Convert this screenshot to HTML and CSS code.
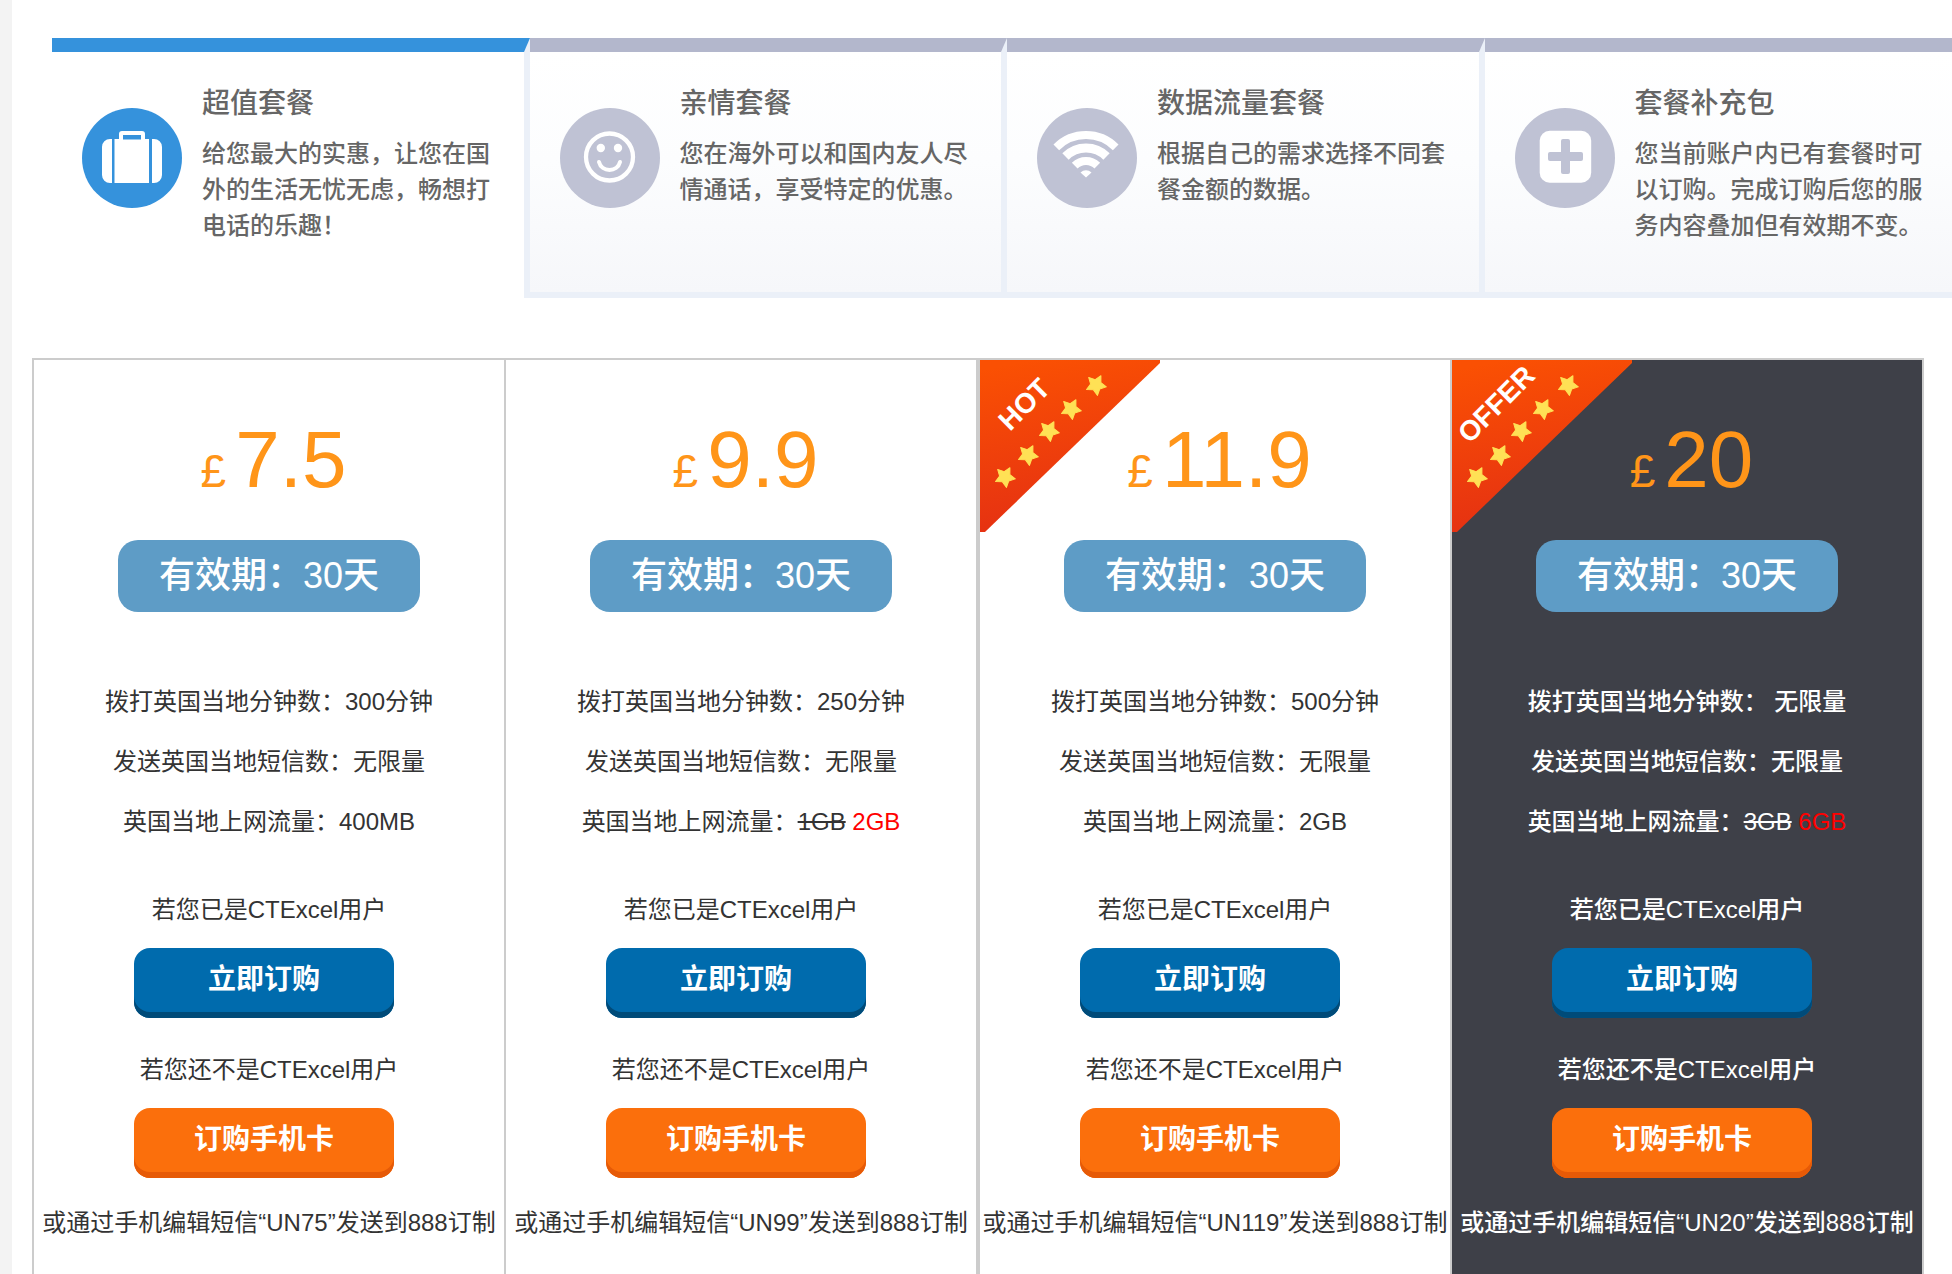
FILE: index.html
```html
<!DOCTYPE html>
<html lang="zh-CN">
<head>
<meta charset="utf-8">
<title>CTExcel 套餐</title>
<link rel="stylesheet" href="styles.css">
</head>
<body>
<main class="page">
  <nav class="tabs">
    <a class="tab tab-active" href="#value">
      <svg class="tab-icon" viewBox="0 0 100 100" aria-hidden="true">
        <circle class="disc" cx="50" cy="50" r="50"/>
        <path class="glyph" d="M30 31v44h-2a8 8 0 0 1-8-8V39a8 8 0 0 1 8-8zM70 31v44h2a8 8 0 0 0 8-8V39a8 8 0 0 0-8-8z"/>
        <path class="glyph" fill-rule="evenodd" d="M32.500 31H37v-5a3 3 0 0 1 3-3h20a3 3 0 0 1 3 3v5h4v44H32.500zM41 27v4.500h18V27z"/>
      </svg>
      <span class="tab-body">
        <span class="tab-title">超值套餐</span>
        <span class="tab-text">给您最大的实惠，让您在国外的生活无忧无虑，畅想打电话的乐趣！</span>
      </span>
    </a>
    <a class="tab" href="#family">
      <svg class="tab-icon" viewBox="0 0 100 100" aria-hidden="true">
        <circle class="disc" cx="50" cy="50" r="50"/>
        <circle class="line" cx="49.500" cy="49" r="23.500" stroke-width="4.300"/>
        <circle class="glyph" cx="40.800" cy="40" r="4.200"/>
        <circle class="glyph" cx="58" cy="40" r="4.200"/>
        <path class="line" stroke-width="4" stroke-linecap="round" d="M39 54c2.500 10.500 18.500 10.500 21 0"/>
      </svg>
      <span class="tab-body">
        <span class="tab-title">亲情套餐</span>
        <span class="tab-text">您在海外可以和国内友人尽情通话，享受特定的优惠。</span>
      </span>
    </a>
    <a class="tab" href="#data">
      <svg class="tab-icon" viewBox="0 0 100 100" aria-hidden="true">
        <circle class="disc" cx="50" cy="50" r="50"/>
        <path class="line" stroke-width="8" d="M19.300 39.300a42 42 0 0 1 59.400 0"/>
        <path class="line" stroke-width="9" d="M28.500 48.500a29 29 0 0 1 41 0"/>
        <path class="line" stroke-width="8" d="M37.700 57.700a16 16 0 0 1 22.600 0"/>
        <path class="glyph" d="M49 69.500l-5.500-5a8 8 0 0 1 11 0z"/>
      </svg>
      <span class="tab-body">
        <span class="tab-title">数据流量套餐</span>
        <span class="tab-text">根据自己的需求选择不同套餐金额的数据。</span>
      </span>
    </a>
    <a class="tab" href="#addon">
      <svg class="tab-icon" viewBox="0 0 100 100" aria-hidden="true">
        <circle class="disc" cx="50" cy="50" r="50"/>
        <rect class="glyph" x="24.700" y="22.700" width="51.500" height="52" rx="10"/>
        <rect class="disc" x="33" y="44" width="35" height="9" rx="2"/>
        <rect class="disc" x="46" y="31" width="9" height="35" rx="2"/>
      </svg>
      <span class="tab-body">
        <span class="tab-title">套餐补充包</span>
        <span class="tab-text">您当前账户内已有套餐时可以订购。完成订购后您的服务内容叠加但有效期不变。</span>
      </span>
    </a>
  </nav>

  <svg class="defs" width="0" height="0" aria-hidden="true">
    <defs>
      <linearGradient id="flame" x1="0.300" y1="0" x2="0.500" y2="1">
        <stop offset="0" stop-color="#fa5003"/>
        <stop offset="1" stop-color="#e42f13"/>
      </linearGradient>
      <path id="star" d="M0-10.500 3.200-4.400 10-3.200 5.200 1.700 6.200 8.500 0 5.500-6.200 8.500-5.200 1.700-10-3.200-3.200-4.400z"/>
      <g id="corner">
        <path d="M0 0h180v3L5 172H0z" fill="url(#flame)"/>
        <g class="stars">
          <use href="#star" transform="translate(116 25) rotate(28)"/>
          <use href="#star" transform="translate(91 49) rotate(28)"/>
          <use href="#star" transform="translate(69 71) rotate(28)"/>
          <use href="#star" transform="translate(48 95) rotate(28)"/>
          <use href="#star" transform="translate(25 117) rotate(28)"/>
        </g>
      </g>
    </defs>
  </svg>

  <section class="plans">
    <article class="plan">
      <p class="price"><span class="currency">£</span>7.5</p>
      <p class="validity">有效期：30天</p>
      <ul class="features">
        <li>拨打英国当地分钟数：300分钟</li>
        <li>发送英国当地短信数：无限量</li>
        <li>英国当地上网流量：400MB</li>
      </ul>
      <p class="hint">若您已是CTExcel用户</p>
      <button class="btn btn-blue" type="button">立即订购</button>
      <p class="hint">若您还不是CTExcel用户</p>
      <button class="btn btn-orange" type="button">订购手机卡</button>
      <p class="sms">或通过手机编辑短信“UN75”发送到888订制</p>
    </article>
    <article class="plan">
      <p class="price"><span class="currency">£</span>9.9</p>
      <p class="validity">有效期：30天</p>
      <ul class="features">
        <li>拨打英国当地分钟数：250分钟</li>
        <li>发送英国当地短信数：无限量</li>
        <li>英国当地上网流量：<del>1GB</del> <em>2GB</em></li>
      </ul>
      <p class="hint">若您已是CTExcel用户</p>
      <button class="btn btn-blue" type="button">立即订购</button>
      <p class="hint">若您还不是CTExcel用户</p>
      <button class="btn btn-orange" type="button">订购手机卡</button>
      <p class="sms">或通过手机编辑短信“UN99”发送到888订制</p>
    </article>
    <article class="plan plan-hot">
      <svg class="ribbon" viewBox="0 0 180 172">
        <use href="#corner"/>
        <text class="ribbon-text" transform="translate(51 51) rotate(-45)">HOT</text>
      </svg>
      <p class="price"><span class="currency">£</span>11.9</p>
      <p class="validity">有效期：30天</p>
      <ul class="features">
        <li>拨打英国当地分钟数：500分钟</li>
        <li>发送英国当地短信数：无限量</li>
        <li>英国当地上网流量：2GB</li>
      </ul>
      <p class="hint">若您已是CTExcel用户</p>
      <button class="btn btn-blue" type="button">立即订购</button>
      <p class="hint">若您还不是CTExcel用户</p>
      <button class="btn btn-orange" type="button">订购手机卡</button>
      <p class="sms">或通过手机编辑短信“UN119”发送到888订制</p>
    </article>
    <article class="plan plan-dark">
      <svg class="ribbon" viewBox="0 0 180 172">
        <use href="#corner"/>
        <text class="ribbon-text" transform="translate(51 51) rotate(-45)">OFFER</text>
      </svg>
      <p class="price"><span class="currency">£</span>20</p>
      <p class="validity">有效期：30天</p>
      <ul class="features">
        <li>拨打英国当地分钟数： 无限量</li>
        <li>发送英国当地短信数：无限量</li>
        <li>英国当地上网流量：<del>3GB</del> <em>6GB</em></li>
      </ul>
      <p class="hint">若您已是CTExcel用户</p>
      <button class="btn btn-blue" type="button">立即订购</button>
      <p class="hint">若您还不是CTExcel用户</p>
      <button class="btn btn-orange" type="button">订购手机卡</button>
      <p class="sms">或通过手机编辑短信“UN20”发送到888订制</p>
    </article>
  </section>
</main>
</body>
</html>
```

FILE: styles.css
```css
body {
  margin: 0;
  padding-left: 12px;
  background: #f3f3f3;
  color: #333;
  font-family: "Liberation Sans", "Noto Sans CJK SC", sans-serif;
  font-size: 24px;
}

p,
ul {
  margin: 0;
  padding: 0;
}

.page {
  display: flex;
  flex-direction: column;
  box-sizing: border-box;
  min-height: 100vh;
  padding-top: 38px;
  background: #fff;
  overflow-x: clip;
}

/* Category tabs; the strip runs past the right edge of the page */
.tabs {
  display: flex;
  margin: 0 -10px 60px 40px;
}

.tab {
  display: flex;
  flex: 1 1 0;
  box-sizing: border-box;
  gap: 20px;
  padding: 32px 30px 48px;
  border: solid #ebf0f8;
  border-width: 14px 6px 6px 0;
  border-top-color: #b3b7cc;
  background: linear-gradient(#fff, #fcfdfe 45%, #f6f7fa);
  color: #666;
  text-decoration: none;
}

.tab-active {
  border-top-color: #3592dc;
  border-bottom: 0;
  background: #fff;
}

.tab-icon {
  flex: none;
  width: 100px;
  height: 100px;
  margin-top: 24px;
}

.disc {
  fill: #bfc2d4;
}

.tab-active .disc {
  fill: #3592dc;
}

.glyph {
  fill: #fff;
}

.line {
  fill: none;
  stroke: #fff;
}

.tab-body {
  display: flex;
  flex-direction: column;
  gap: 12px;
  font-weight: 500;
}

.tab-title {
  font-size: 28px;
  line-height: 40px;
}

.tab-text {
  line-height: 36px;
}

.defs {
  position: absolute;
}

/* Price plans */
.plans {
  display: flex;
  flex: 1;
  margin: 0 28px 0 20px;
  border: solid #ccc;
  border-width: 2px 0 0 2px;
}

.plan {
  position: relative;
  display: flex;
  flex: 1 1 0;
  flex-direction: column;
  align-items: center;
  min-width: 0;
  padding: 60px 0 20px;
  border-right: 2px solid #ccc;
  white-space: nowrap;
}

.plan-hot {
  border-left: 2px solid #ccc;
}

.plan-dark {
  background: #3e4048;
  color: #fff;
  font-weight: 500;
}

.ribbon {
  position: absolute;
  top: 0;
  left: 0;
  width: 180px;
  height: 172px;
}

.stars {
  fill: #ffe155;
  stroke: #ffe155;
  stroke-linejoin: round;
}

.ribbon-text {
  fill: #fff;
  font-size: 28px;
  font-weight: bold;
  text-anchor: middle;
}

.price {
  position: relative;
  color: #ff9519;
  font-size: 80px;
  line-height: 80px;
}

.currency {
  margin: 0 9px;
  font-size: 46px;
  line-height: 46px;
}

.validity {
  box-sizing: border-box;
  width: 302px;
  margin: 40px 0 60px;
  border-radius: 20px;
  background: #5e9cc6;
  color: #fff;
  font-size: 36px;
  font-weight: 500;
  line-height: 72px;
  text-align: center;
}

.features {
  margin-bottom: 28px;
  line-height: 60px;
  list-style: none;
  text-align: center;
}

.features em {
  color: #f00;
  font-style: normal;
}

.hint {
  line-height: 60px;
}

.btn {
  width: 260px;
  height: 70px;
  margin: 8px 10px 22px 0;
  padding: 0 0 6px;
  border: 0;
  border-radius: 16px;
  color: #fff;
  font: bold 28px/64px "Liberation Sans", "Noto Sans CJK SC", sans-serif;
  cursor: pointer;
}

.btn-blue {
  background: #006bad;
  box-shadow: inset 0 -6px #004b79;
}

.btn-orange {
  background: #fb6f0c;
  box-shadow: inset 0 -6px #e65a07;
}

.sms {
  line-height: 46px;
}
```
